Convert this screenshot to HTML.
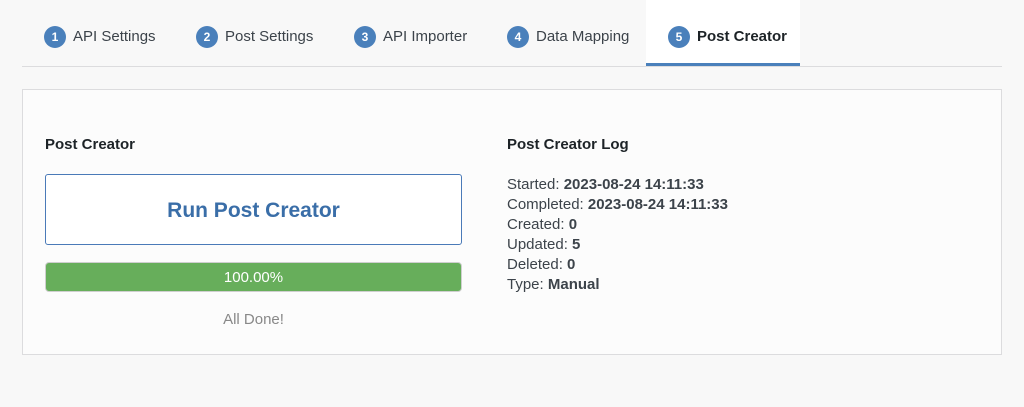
<!DOCTYPE html>
<html><head><style>
body{margin:0;width:1024px;height:407px;background:#f8f8f8;font-family:"Liberation Sans",sans-serif;color:#3c434a;position:relative;overflow:hidden}
.a{position:absolute;white-space:nowrap}
.tab{position:absolute;top:26px;font-size:15px;height:22px;line-height:22px}
.tab i{display:inline-block;width:22px;height:22px;border-radius:50%;background:#4a80bb;color:#fff;font-style:normal;font-weight:bold;font-size:12px;text-align:center;line-height:22px;margin-right:7px;vertical-align:top}
.log div{font-size:15px;line-height:20px}
</style></head><body>
<div class="a" style="left:646px;top:0;width:154px;height:63px;background:#fff;border-bottom:3px solid #4a80bb"></div>
<div class="a" style="left:22px;top:66px;width:980px;height:1px;background:#dcdcde"></div>
<div class="tab" style="left:44px"><i>1</i>API Settings</div>
<div class="tab" style="left:196px"><i>2</i>Post Settings</div>
<div class="tab" style="left:354px"><i>3</i>API Importer</div>
<div class="tab" style="left:507px"><i>4</i>Data Mapping</div>
<div class="tab" style="left:668px;font-weight:bold;color:#1d2327"><i>5</i>Post Creator</div>
<div class="a" style="left:22px;top:89px;width:978px;height:264px;border:1px solid #dcdcde;background:#fcfcfc"></div>
<div class="a" style="left:45px;top:136px;font-size:15px;font-weight:bold;color:#1d2327">Post Creator</div>
<div class="a" style="left:45px;top:174px;width:415px;height:69px;border:1px solid #4a7ab8;border-radius:3px;background:#fff;text-align:center;line-height:71px;font-size:21px;font-weight:bold;color:#3a6ea8">Run Post Creator</div>
<div class="a" style="left:45px;top:262px;width:415px;height:28px;border:1px solid #cfcfcf;border-radius:4px;background:#67ae5b;text-align:center;line-height:29px;font-size:15px;color:#fff">100.00%</div>
<div class="a" style="left:45px;top:311px;width:417px;text-align:center;font-size:15px;color:#888">All Done!</div>
<div class="a" style="left:507px;top:136px;font-size:15px;font-weight:bold;color:#1d2327">Post Creator Log</div>
<div class="a log" style="left:507px;top:175px">
<div>Started: <b>2023-08-24 14:11:33</b></div>
<div>Completed: <b>2023-08-24 14:11:33</b></div>
<div>Created: <b>0</b></div>
<div>Updated: <b>5</b></div>
<div>Deleted: <b>0</b></div>
<div>Type: <b>Manual</b></div>
</div>
</body></html>
